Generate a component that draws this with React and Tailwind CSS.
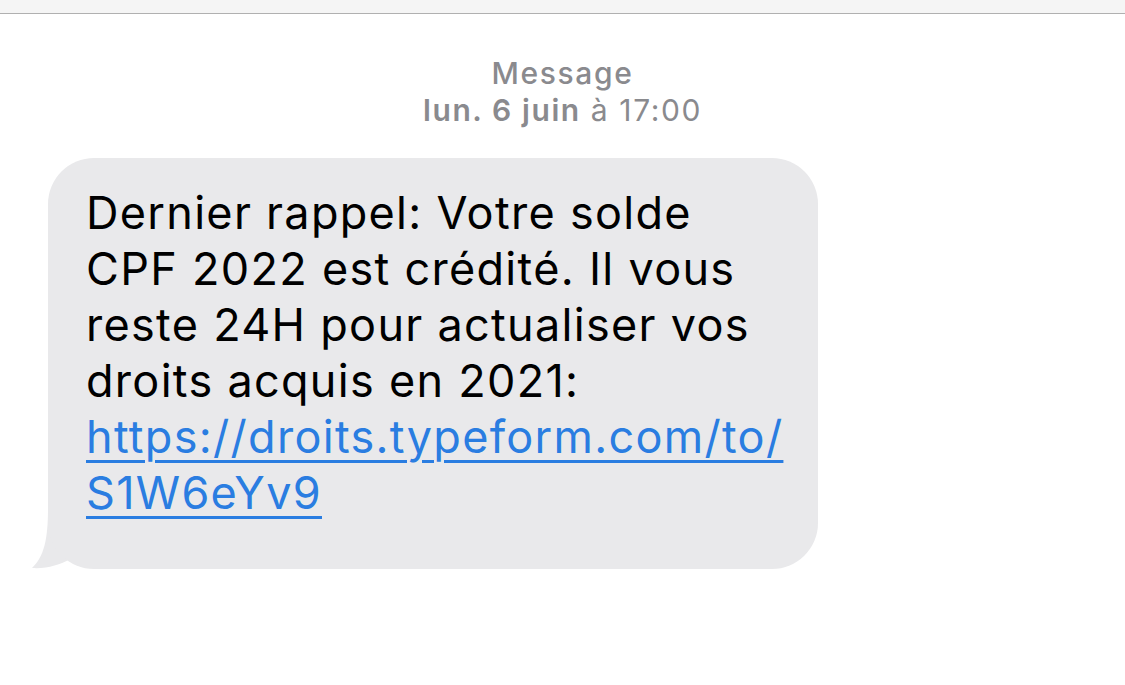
export default function App() {
  const font = { fontFamily: 'Inter, "Liberation Sans", sans-serif' };
  return (
    <div className="w-[1125px] h-[685px] bg-white overflow-hidden" style={font}>
      <div className="h-[14px] bg-[#f5f5f5] border-b border-[#b0b0b0]" />
      <div className="flex flex-col items-center pt-[41px] text-[#8a8a8e] text-[30px] leading-[37px] tracking-[1.6px]">
        <div className="font-medium">Message</div>
        <div>
          <span className="font-semibold">lun. 6 juin</span> à 17:00
        </div>
      </div>
      <div className="relative ml-[48px] mt-[29px] w-[770px]">
        <svg className="absolute left-[-16px] bottom-0" width="80" height="60" viewBox="0 0 80 60">
          <path d="M16 0 C16 30 12 48 0 59 C14 60 28 56 38 50 C48 56 60 60 80 60 L80 0 Z" fill="#e9e9eb" />
        </svg>
        <div className="relative bg-[#e9e9eb] rounded-[46px] pl-[38px] pr-[20px] pt-[27px] pb-[48px] text-[45px] leading-[56px] text-black tracking-[1.3px]">
          <div>Dernier rappel: Votre solde</div>
          <div>CPF 2022 est crédité. Il vous</div>
          <div>reste 24H pour actualiser vos</div>
          <div>droits acquis en 2021:</div>
          <a href="#" className="text-[#2a7de1] underline decoration-[3px] underline-offset-[7px]">
            https://droits.typeform.com/to/
            <br />
            S1W6eYv9
          </a>
        </div>
      </div>
    </div>
  );
}
